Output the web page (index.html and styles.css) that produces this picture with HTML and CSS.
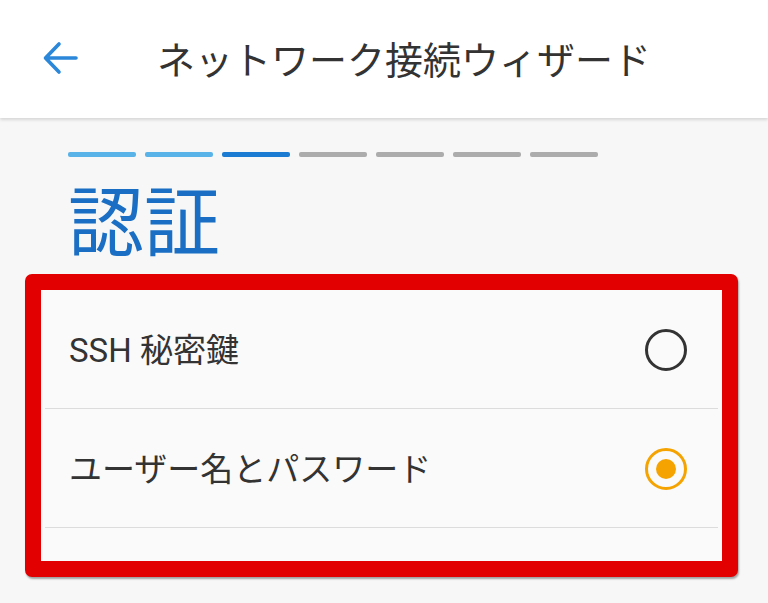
FILE: index.html
```html
<!DOCTYPE html>
<html lang="ja">
<head>
<meta charset="utf-8">
<title>ネットワーク接続ウィザード</title>
<link rel="stylesheet" href="styles.css">
</head>
<body>
<header class="appbar">
  <svg class="back" width="36" height="34" viewBox="0 0 36 34" aria-hidden="true">
    <path d="M34 17 H4 M17 3 L3.5 17 L17 31" fill="none" stroke="#2a87d9" stroke-width="3.6" stroke-linecap="round" stroke-linejoin="round"/>
  </svg>
  <h1 class="title">ネットワーク接続ウィザード</h1>
</header>
<main class="content">
  <div class="steps">
    <span class="step done"></span>
    <span class="step done"></span>
    <span class="step current"></span>
    <span class="step"></span>
    <span class="step"></span>
    <span class="step"></span>
    <span class="step"></span>
  </div>
  <h2 class="heading">認証</h2>
  <section class="options">
    <div class="option">
      <span class="label">SSH 秘密鍵</span>
      <span class="radio"></span>
    </div>
    <div class="option">
      <span class="label">ユーザー名とパスワード</span>
      <span class="radio checked"><span class="dot"></span></span>
    </div>
    <div class="rest"></div>
  </section>
</main>
</body>
</html>
```
FILE: styles.css
```css
html, body {
  margin: 0;
  padding: 0;
}
body {
  width: 768px;
  height: 603px;
  overflow: hidden;
  background: #f7f7f7;
  font-family: "Roboto", "Noto Sans CJK JP", sans-serif;
  color: #333;
}
.appbar {
  height: 118px;
  background: #ffffff;
  display: flex;
  align-items: center;
  box-shadow: 0 2px 3px rgba(0, 0, 0, 0.13);
  position: relative;
  z-index: 1;
}
.back {
  margin-left: 42px;
  margin-top: -3px;
  flex: none;
}
.title {
  margin: -3px 0 0 79px;
  font-family: "Noto Sans CJK JP", sans-serif;
  font-weight: 400;
  font-size: 38px;
  line-height: 1;
  color: #333;
}
.content {
  padding-top: 34px;
}
.steps {
  display: flex;
  gap: 9px;
  margin-left: 68px;
}
.step {
  width: 68px;
  height: 5px;
  border-radius: 2px;
  background: #acacac;
}
.step.done {
  background: #5ab3e8;
}
.step.current {
  background: #1b7bd2;
}
.heading {
  margin: 22px 0 0 68px;
  font-family: "Noto Sans CJK JP", sans-serif;
  font-weight: 400;
  font-size: 76px;
  line-height: 1;
  color: #1a6fc4;
  height: 84px;
}
.options {
  margin: 11px 0 0 25px;
  width: 713px;
  box-sizing: border-box;
  border: 16px solid #e20000;
  border-radius: 7px;
  background: #fafafa;
  box-shadow: 1px 2px 2px rgba(0, 0, 0, 0.35);
}
.option {
  height: 119px;
  box-sizing: border-box;
  margin: 0 4px;
  border-bottom: 1px solid #dcdcdc;
  display: flex;
  align-items: center;
  justify-content: space-between;
  padding: 2px 31px 0 24px;
}
.label {
  font-size: 33px;
  line-height: 1;
  color: #333;
}
.radio {
  width: 42px;
  height: 42px;
  box-sizing: border-box;
  border: 3px solid #333;
  border-radius: 50%;
  display: flex;
  align-items: center;
  justify-content: center;
}
.radio.checked {
  border-color: #f5a300;
}
.dot {
  width: 20px;
  height: 20px;
  border-radius: 50%;
  background: #f5a300;
}
.rest {
  height: 33px;
}
```
